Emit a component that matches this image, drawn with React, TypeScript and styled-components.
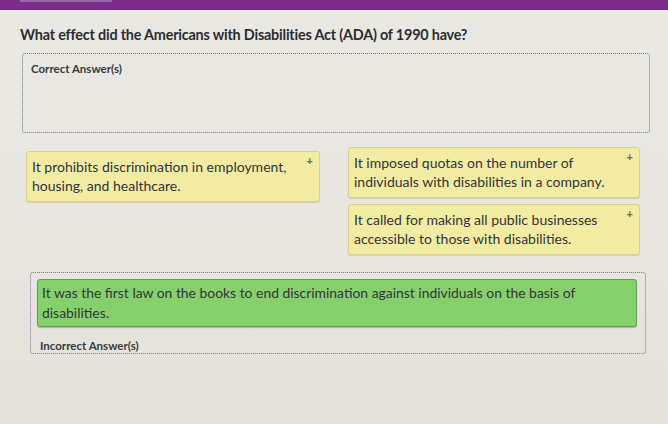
import { FunctionComponent } from "react";
import styled, { createGlobalStyle } from "styled-components";

const GlobalStyle = createGlobalStyle`
  html, body {
    margin: 0;
    padding: 0;
    background: #e8e6e0;
  }
  body {
    font-family: Lato, "Open Sans", "Liberation Sans", sans-serif;
    color: #2f2f33;
  }
`;

const Page = styled.div`
  width: 668px;
  height: 424px;
  overflow: hidden;
  background: linear-gradient(180deg, #e9e8e3 0%, #e7e5df 60%, #e4e1da 100%);
`;

const TopBar = styled.div`
  height: 10px;
  background: #7c2d8c;
  padding-left: 20px;
`;

const BarTab = styled.div`
  width: 92px;
  height: 2px;
  background: #9a6aa6;
`;

const Body = styled.div`
  padding: 0 18px 0 20px;
`;

const Question = styled.h1`
  margin: 16px 0 0;
  font-size: 14.4px;
  line-height: 18px;
  font-weight: 700;
  letter-spacing: -0.2px;
  color: #2c2c31;
`;

const DropZone = styled.div<{ $inset?: number }>`
  box-sizing: border-box;
  border: 1px dotted #767688;
  border-radius: 3px;
  margin: 0 0 0 ${({ $inset }) => $inset ?? 0}px;
`;

const CorrectZone = styled(DropZone)`
  margin-top: 9px;
  height: 80px;
  padding: 8px 8px;
`;

const IncorrectZone = styled(DropZone)`
  margin-top: 17px;
  margin-right: 4px;
  height: 82px;
  padding: 6px 8px 2px 6px;
`;

const ZoneLabel = styled.div`
  font-size: 11.5px;
  line-height: 14px;
  font-weight: 700;
  color: #3a3a3f;
`;

const Choices = styled.div`
  display: grid;
  grid-template-columns: 294px 292px;
  column-gap: 28px;
  margin: 14px 0 0 6px;
  align-items: start;
`;

const Column = styled.div<{ $offset?: number }>`
  display: flex;
  flex-direction: column;
  gap: 6px;
  margin-top: ${({ $offset }) => $offset ?? 0}px;
`;

const Card = styled.div<{ $tone: "yellow" | "green" }>`
  position: relative;
  box-sizing: border-box;
  padding: 5px 28px 5px 5px;
  min-height: 51px;
  font-size: 14px;
  line-height: 19px;
  color: #33343a;
  border-radius: 3px;
  background: ${({ $tone }) => ($tone === "green" ? "#86d06c" : "#f2eca3")};
  border: 1px solid ${({ $tone }) => ($tone === "green" ? "#6a9e58" : "#ddd08e")};
  box-shadow: ${({ $tone }) =>
    $tone === "green" ? "0 1px 1px rgba(70, 110, 60, 0.4)" : "0 1px 1px rgba(150, 140, 90, 0.25)"};
`;

const GreenCard = styled(Card)`
  min-height: 45px;
  padding: 3px 20px 3px 4px;
  font-size: 13.9px;
  line-height: 20px;
`;

const Plus = styled.span`
  position: absolute;
  top: 4px;
  right: 6px;
  font-size: 11px;
  line-height: 10px;
  font-weight: 900;
  color: #6f6d63;
`;

const IncorrectLabel = styled(ZoneLabel)`
  margin: 12px 0 0 3px;
`;

type Choice = { text: string };

const left: Choice[] = [
  { text: "It prohibits discrimination in employment, housing, and healthcare." },
];

const right: Choice[] = [
  { text: "It imposed quotas on the number of individuals with disabilities in a company." },
  { text: "It called for making all public businesses accessible to those with disabilities." },
];

const AnswerCard: FunctionComponent<Choice> = ({ text }) => (
  <Card $tone="yellow">
    {text}
    <Plus>+</Plus>
  </Card>
);

const App: FunctionComponent = () => {
  return (
    <Page>
      <GlobalStyle />
      <TopBar>
        <BarTab />
      </TopBar>
      <Body>
        <Question>What effect did the Americans with Disabilities Act (ADA) of 1990 have?</Question>
        <CorrectZone $inset={2}>
          <ZoneLabel>Correct Answer(s)</ZoneLabel>
        </CorrectZone>

        <Choices>
          <Column $offset={4}>
            {left.map((c) => (
              <AnswerCard key={c.text} {...c} />
            ))}
          </Column>
          <Column>
            {right.map((c) => (
              <AnswerCard key={c.text} {...c} />
            ))}
          </Column>
        </Choices>

        <IncorrectZone $inset={10}>
          <GreenCard $tone="green">
            It was the first law on the books to end discrimination against individuals on the basis of
            disabilities.
          </GreenCard>
          <IncorrectLabel>Incorrect Answer(s)</IncorrectLabel>
        </IncorrectZone>
      </Body>
    </Page>
  );
};

export default App;
